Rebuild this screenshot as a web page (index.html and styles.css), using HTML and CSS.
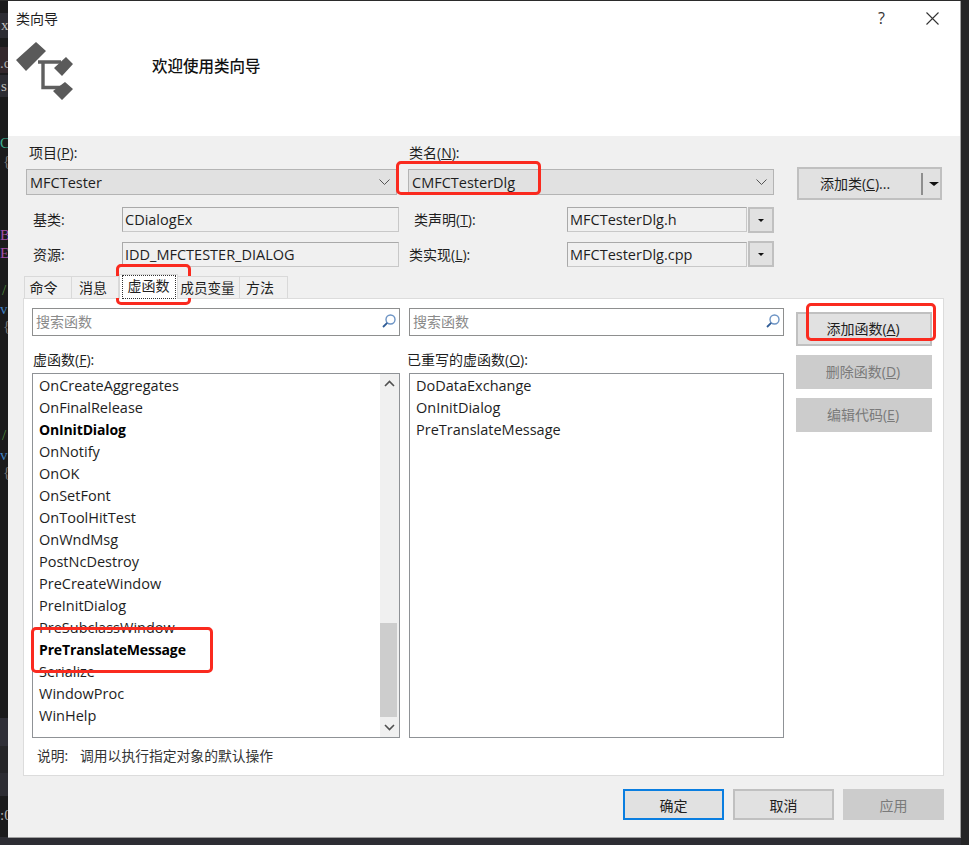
FILE: index.html
```html
<!DOCTYPE html>
<html lang="zh-CN">
<head>
<meta charset="utf-8">
<title>类向导</title>
<link rel="stylesheet" href="styles.css">
</head>
<body>
<div class="desktop">
  <div class="band band-tab1"></div>
  <div class="band band-tab2"></div>
  <div class="band band-tab3"></div>
  <div class="band band-low1"></div>
  <div class="band band-low2"></div>
  <div class="band band-low3"></div>
  <div class="band band-foot"></div>
  <div class="band band-top"></div>
  <div class="band band-right"></div>
  <span class="code c-x">x</span>
  <span class="code c-dc">.c</span>
  <span class="code c-s">s</span>
  <span class="code c-C">C</span>
  <span class="code c-b1">{</span>
  <span class="code c-B">B</span>
  <span class="code c-E">E</span>
  <span class="code c-s1">/</span>
  <span class="code c-v1">v</span>
  <span class="code c-b2">{</span>
  <span class="code c-s2">/</span>
  <span class="code c-v2">v</span>
  <span class="code c-b3">{</span>
  <span class="code c-t">:0</span>

  <div class="dialog">
    <header class="head">
      <div class="titlebar">
        <span class="title">类向导</span>
        <span class="help">?</span>
        <svg class="close" viewBox="0 0 13 13"><path d="M.5.5l12 12M12.5.5l-12 12"/></svg>
      </div>
      <div class="banner">
        <svg class="logo" viewBox="0 0 60 60">
          <path class="logo-line" d="M23 21H46M28 21V46.500H46"/>
          <path class="logo-fill" d="M1 19 21 1 31 10 11 30zM39 27 51 16 58 23 47 35zM38 50 50 41 58 48 47 59z"/>
        </svg>
        <h1 class="welcome">欢迎使用类向导</h1>
      </div>
    </header>

    <div class="form">
      <div class="label-row">
        <label class="top-label first">项目(<u>P</u>):</label>
        <label class="top-label second">类名(<u>N</u>):</label>
      </div>
      <div class="combo-row">
        <div class="combo combo-a"><span>MFCTester</span><svg class="chev" viewBox="0 0 11 6"><path d="M.5.5l5 5 5-5"/></svg></div>
        <div class="combo combo-b"><span>CMFCTesterDlg</span><svg class="chev" viewBox="0 0 11 6"><path d="M.5.5l5 5 5-5"/></svg></div>
        <div class="btn split">
          <span class="split-text">添加类(<u>C</u>)...</span>
          <span class="split-sep"></span>
          <span class="caret wide"></span>
        </div>
      </div>
      <div class="field-row upper">
        <span class="f-label">基类:</span>
        <div class="input wide-input">CDialogEx</div>
        <span class="f-label right indent">类声明(<u>T</u>):</span>
        <div class="input file-input">MFCTesterDlg.h</div>
        <div class="btn drop"><span class="caret"></span></div>
      </div>
      <div class="field-row lower">
        <span class="f-label">资源:</span>
        <div class="input wide-input">IDD_MFCTESTER_DIALOG</div>
        <span class="f-label right">类实现(<u>L</u>):</span>
        <div class="input file-input">MFCTesterDlg.cpp</div>
        <div class="btn drop"><span class="caret"></span></div>
      </div>
    </div>

    <nav class="tabs">
      <span class="tab t1">命令</span>
      <span class="tab t2">消息</span>
      <span class="tab active"><span class="focus">虚函数</span></span>
      <span class="tab t4">成员变量</span>
      <span class="tab t5">方法</span>
    </nav>

    <section class="panel">
      <div class="columns">
        <div class="col col-left">
          <div class="search">
            <span>搜索函数</span>
            <svg class="glass" viewBox="0 0 14 14"><circle cx="8.5" cy="5.5" r="4.5"/><path d="M5.2 8.8 1 13"/></svg>
          </div>
          <div class="col-label">虚函数(<u>F</u>):</div>
          <div class="listbox">
            <ul class="items">
              <li>OnCreateAggregates</li>
              <li>OnFinalRelease</li>
              <li class="bold">OnInitDialog</li>
              <li>OnNotify</li>
              <li>OnOK</li>
              <li>OnSetFont</li>
              <li>OnToolHitTest</li>
              <li>OnWndMsg</li>
              <li>PostNcDestroy</li>
              <li>PreCreateWindow</li>
              <li>PreInitDialog</li>
              <li>PreSubclassWindow</li>
              <li class="bold">PreTranslateMessage</li>
              <li>Serialize</li>
              <li>WindowProc</li>
              <li>WinHelp</li>
            </ul>
            <div class="scrollbar">
              <svg class="arrow" viewBox="0 0 19 19"><path d="M5 12l4.5-4.5L14 12"/></svg>
              <div class="thumb"></div>
              <svg class="arrow down" viewBox="0 0 19 19"><path d="M5 7l4.5 4.5L14 7"/></svg>
            </div>
          </div>
        </div>
        <div class="col col-right">
          <div class="search">
            <span>搜索函数</span>
            <svg class="glass" viewBox="0 0 14 14"><circle cx="8.5" cy="5.5" r="4.5"/><path d="M5.2 8.8 1 13"/></svg>
          </div>
          <div class="col-label shifted">已重写的虚函数(<u>O</u>):</div>
          <div class="listbox">
            <ul class="items">
              <li>DoDataExchange</li>
              <li>OnInitDialog</li>
              <li>PreTranslateMessage</li>
            </ul>
          </div>
        </div>
        <div class="col col-actions">
          <div class="btn action">添加函数(<u>A</u>)</div>
          <div class="btn action disabled">删除函数(<u>D</u>)</div>
          <div class="btn action disabled">编辑代码(<u>E</u>)</div>
        </div>
      </div>
      <p class="desc"><span class="desc-key">说明:</span>调用以执行指定对象的默认操作</p>
    </section>

    <footer class="foot">
      <div class="btn foot-btn primary">确定</div>
      <div class="btn foot-btn">取消</div>
      <div class="btn foot-btn disabled">应用</div>
    </footer>
  </div>

  <div class="mark mark-class"></div>
  <div class="mark mark-tab"></div>
  <div class="mark mark-add"></div>
  <div class="mark mark-item"></div>
</div>
</body>
</html>
```
FILE: styles.css
```css
* { box-sizing: border-box; }
html, body { margin: 0; padding: 0; background: #1b1b1c; }
body { width: 969px; height: 845px; overflow: hidden; }
ul, h1, p { margin: 0; padding: 0; }
ul { list-style: none; }

.desktop {
  position: relative;
  width: 969px;
  height: 845px;
  overflow: hidden;
  background: #1b1b1c;
  font-family: "Open Sans", "Noto Sans CJK SC", sans-serif;
  font-size: 14px;
  color: #1e1e1e;
}

/* blurred editor showing behind the dialog */
.band { position: absolute; }
.band-top { left: 0; top: 0; width: 969px; height: 1px; background: #2b2b2b; }
.band-right { left: 961px; top: 0; width: 8px; height: 845px; background: #252526; }
.band-tab1 { left: 0; top: 13px; width: 8px; height: 25px; background: #2d2d33; }
.band-tab2 { left: 0; top: 47px; width: 8px; height: 26px; background: #33282c; }
.band-tab3 { left: 0; top: 75px; width: 8px; height: 22px; background: #2d2d33; }
.band-low1 { left: 0; top: 718px; width: 8px; height: 28px; background: #2f2f37; }
.band-low2 { left: 0; top: 746px; width: 8px; height: 27px; background: #252528; }
.band-low3 { left: 0; top: 773px; width: 8px; height: 23px; background: #2d2d33; }
.band-foot { left: 0; top: 837px; width: 969px; height: 8px; background: #2d2d33; }

.code { position: absolute; font-family: "Liberation Serif", serif; font-size: 15px; line-height: 16px; color: #9a9a9a; }
.c-x { left: 1px; top: 17px; color: #bdbdbd; }
.c-dc { left: 0; top: 55px; color: #a9a9a9; }
.c-s { left: 1px; top: 78px; color: #bdbdbd; }
.c-C { left: 0; top: 135px; color: #3aa98c; }
.c-b1 { left: 3px; top: 153px; color: #777; }
.c-B { left: 0; top: 227px; color: #a04fa8; }
.c-E { left: 0; top: 245px; color: #a04fa8; }
.c-s1 { left: 2px; top: 282px; color: #4f8a3c; }
.c-v1 { left: 0; top: 301px; color: #3f7fc0; }
.c-b2 { left: 3px; top: 318px; color: #777; }
.c-s2 { left: 2px; top: 427px; color: #4f8a3c; }
.c-v2 { left: 0; top: 447px; color: #3f7fc0; }
.c-b3 { left: 3px; top: 464px; color: #777; }
.c-t { left: 0; top: 807px; color: #b5b5b5; }

/* dialog window */
.dialog {
  position: absolute;
  left: 8px;
  top: 1px;
  width: 953px;
  height: 837px;
  display: flex;
  flex-direction: column;
  background: #f0f0f0;
  border-right: 1px solid #a0a0a0;
  border-bottom: 1px solid #a0a0a0;
}

.head { height: 135px; background: #fff; }
.titlebar { display: flex; align-items: center; height: 34px; padding-left: 8px; }
.title { font-size: 14px; flex: 1; }
.help { font-size: 16px; width: 48px; color: #333; }
.close { width: 13px; height: 13px; margin-right: 21px; margin-left: 0; }
.close path { fill: none; stroke: #333; stroke-width: 1.1; }

.banner { display: flex; align-items: flex-start; padding-left: 8px; }
.logo { width: 60px; height: 60px; margin-top: 6px; margin-left: -1px; }
.logo-fill { fill: #5a5a5a; }
.logo-line { fill: none; stroke: #5f5f5f; stroke-width: 3.4; }
.welcome { font-size: 15.5px; font-weight: 500; color: #111; margin-left: 77px; margin-top: 20px; line-height: 22px; }

/* form fields */
.label-row { display: flex; height: 33px; padding-bottom: 2px; align-items: center; }
.top-label { font-size: 14px; }
.top-label.first { margin-left: 21px; width: 380px; }

.combo-row { display: flex; align-items: flex-start; height: 26px; margin-left: 18px; }
.combo {
  display: flex;
  align-items: center;
  justify-content: space-between;
  height: 26px;
  padding: 0 3px 0 3px;
  background: #e1e1e1;
  border: 1px solid #b4b4b4;
  font-size: 14.5px;
}
.combo-a { width: 371px; margin-right: 11px; }
.combo-b { width: 366px; margin-right: 23px; }
.chev { width: 11px; height: 6px; margin-right: 3px; }
.chev path { fill: none; stroke: #555; stroke-width: 1; }

.btn {
  display: flex;
  align-items: center;
  justify-content: center;
  background: #e1e1e1;
  border: 2px solid #c0c0c0;
  color: #1e1e1e;
}
.split { width: 145px; height: 33px; margin-top: -2px; justify-content: flex-start; }
.split-text { width: 122px; padding-right: 10px; padding-bottom: 2px; text-align: center; font-size: 14px; }
.split-sep { width: 2px; height: 22px; background: #8e8e8e; }
.caret { width: 0; height: 0; border-left: 3px solid transparent; border-right: 3px solid transparent; border-top: 3px solid #111; }
.caret.wide { margin-left: 6px; border-left-width: 5px; border-right-width: 5px; border-top-width: 4px; }

.field-row { display: flex; height: 26px; margin-left: 18px; }
.field-row.upper { margin-top: 12px; align-items: flex-start; }
.field-row.lower { margin-top: 8px; align-items: flex-end; }
.f-label { width: 96px; padding-left: 7px; line-height: 25px; font-size: 14px; }
.f-label.right { width: 168px; padding-left: 10px; }
.f-label.indent { padding-left: 15px; }
.input {
  height: 25px;
  line-height: 23px;
  padding-left: 2px;
  background: #f0f0f0;
  border: 1px solid #a9a9a9;
  border-right-color: #c8c8c8;
  border-bottom-color: #c8c8c8;
  font-size: 14.5px;
  white-space: nowrap;
}
.wide-input { width: 277px; }
.file-input { width: 180px; }
.drop { width: 26px; height: 26px; margin-left: 1px; align-self: flex-start; }
.lower .drop { align-self: flex-end; }

/* tabs */
.tabs { display: flex; align-items: flex-end; height: 24px; margin-top: 7px; margin-left: 16px; position: relative; z-index: 1; }
.tab {
  display: flex;
  align-items: center;
  justify-content: center;
  height: 22px;
  padding-bottom: 2px;
  background: #f0f0f0;
  border: 1px solid #d9d9d9;
  border-bottom: 0;
  border-left: 0;
  font-size: 14px;
}
.t1 { width: 48px; padding-right: 9px; border-left: 1px solid #d9d9d9; }
.t2 { width: 47px; padding-right: 4px; }
.t4 { width: 62px; white-space: nowrap; font-size: 13.6px; padding-right: 2px; }
.t5 { width: 48px; padding-right: 7px; }
.active { width: 59px; height: 25px; margin-bottom: -1px; padding-bottom: 0; background: #fff; border-left: 1px solid #d9d9d9; align-items: flex-end; }
.focus { outline: 1px dotted #333; outline-offset: 0; width: 52px; height: 22px; line-height: 20px; text-align: center; margin-bottom: 1px; }

/* panel */
.panel {
  width: 921px;
  height: 478px;
  margin-left: 15px;
  padding-top: 9px;
  background: #fff;
  border: 1px solid #dcdcdc;
}
.columns { display: flex; align-items: flex-start; }
.col-left { width: 368px; margin-left: 8px; }
.col-right { width: 375px; margin-left: 9px; }
.col-actions { width: 136px; margin-left: 12px; padding-top: 4px; display: flex; flex-direction: column; gap: 9px; }

.search {
  display: flex;
  align-items: center;
  justify-content: space-between;
  height: 28px;
  padding: 0 3px 3px 3px;
  border: 1px solid #8e8f8f;
  color: #8a8a8a;
  font-size: 14px;
}
.glass { width: 14px; height: 14px; }
.glass circle, .glass path { fill: none; stroke-width: 1.4; }
.glass circle { stroke: #6c93c4; }
.glass path { stroke: #2f5c96; stroke-width: 1.8; }

.col-label { height: 37px; padding-top: 14px; padding-left: 1px; line-height: 20px; font-size: 14px; }
.col-label.shifted { margin-left: -3px; }
.listbox { display: flex; height: 365px; border: 1px solid #8f9296; overflow: hidden; }
.items { flex: 1; padding: 1px 0 0 6px; }
.items li { height: 22px; line-height: 22px; font-size: 14.5px; white-space: nowrap; }
.items li.bold { font-size: 14px; letter-spacing: -0.15px; font-weight: 700; color: #000; }

.scrollbar { width: 19px; display: flex; flex-direction: column; background: #f0f0f0; }
.arrow { width: 19px; height: 19px; flex: none; }
.arrow path { fill: none; stroke: #505050; stroke-width: 1.6; }
.arrow.down { margin-top: auto; }
.thumb { width: 17px; height: 94px; margin-top: 230px; background: #cdcdcd; flex: none; }

.action { height: 34px; padding: 0 2px 2px 0; font-size: 14px; }
.disabled { background: #cccccc; border-color: #cccccc; color: #7a7a7a; }

.desc { height: 20px; margin-top: 8px; margin-left: 13px; line-height: 20px; font-size: 13.8px; color: #333; }
.desc-key { display: inline-block; width: 43px; }

.foot { display: flex; justify-content: flex-end; gap: 9px; padding: 13px 16px 0 0; }
.foot-btn { width: 101px; height: 31px; font-size: 14px; }
.primary { border-color: #0a7ee0; }

/* red annotation boxes drawn over the screenshot */
.mark { position: absolute; border: 3px solid #fa2a1f; border-radius: 5px; }
.mark-class { left: 396px; top: 161px; width: 145px; height: 34px; }
.mark-tab { left: 116px; top: 264px; width: 75px; height: 41px; }
.mark-add { left: 806px; top: 303px; width: 130px; height: 38px; }
.mark-item { left: 31px; top: 627px; width: 182px; height: 46px; }
```
